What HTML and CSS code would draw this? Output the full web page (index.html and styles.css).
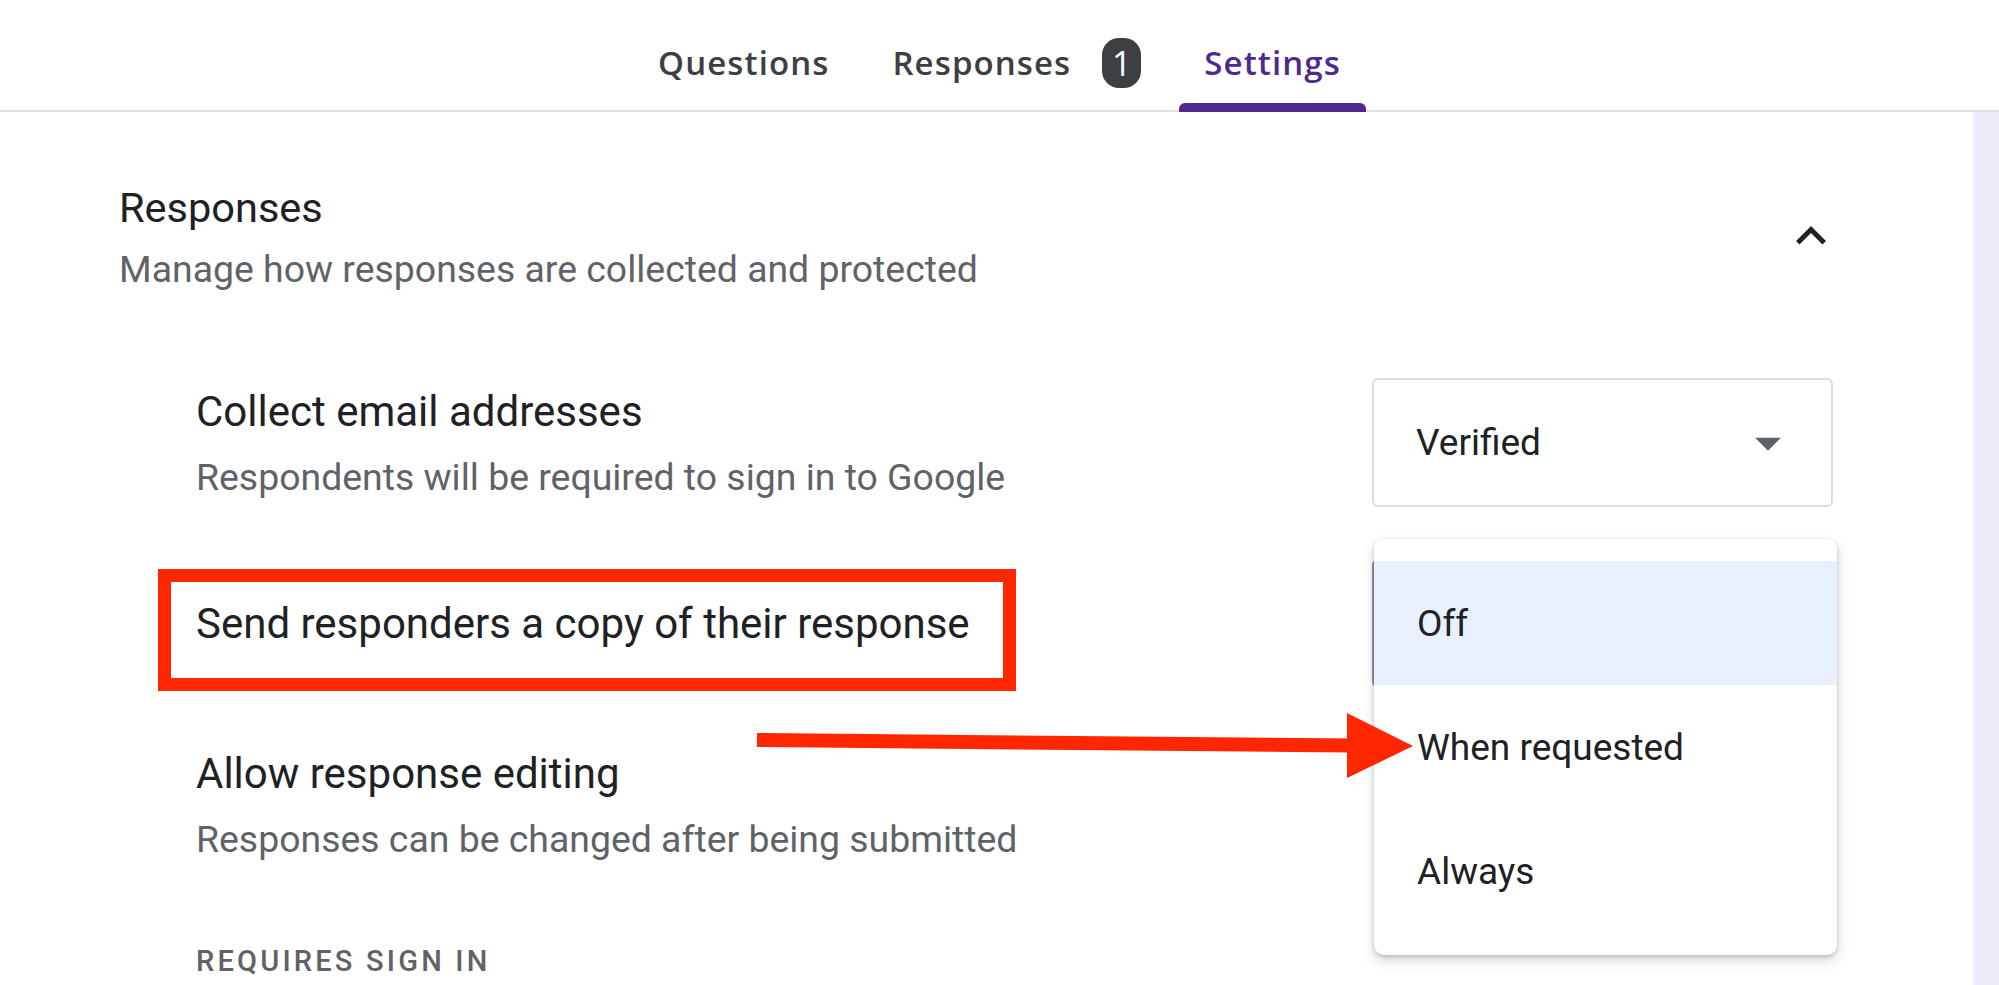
FILE: index.html
```html
<!DOCTYPE html>
<html lang="en">
<head>
    <meta charset="UTF-8">
    <meta name="viewport" content="width=device-width, initial-scale=1.0">
    <title>Form settings</title>
    <link rel="stylesheet" href="styles.css">
</head>
<body>

    <header class="topbar">
        <nav class="tabs">
            <a class="tab">Questions</a>
            <a class="tab">Responses<span class="badge">1</span></a>
            <a class="tab tab-active">Settings</a>
        </nav>
    </header>

    <main class="page">
        <section class="panel">
            <div class="section-head">
                <div>
                    <h2 class="section-title">Responses</h2>
                    <p class="section-sub">Manage how responses are collected and protected</p>
                </div>
                <button class="icon-btn" aria-label="Collapse">
                    <svg viewBox="0 0 24 24" width="60" height="60"><path d="M12 8l-6 6 1.41 1.41L12 10.83l4.59 4.58L18 14z"/></svg>
                </button>
            </div>

            <div class="setting-list">
                <div class="setting-row">
                    <div class="setting-text">
                        <div class="setting-title">Collect email addresses</div>
                        <div class="setting-desc">Respondents will be required to sign in to Google</div>
                    </div>
                    <div class="select">
                        <span>Verified</span>
                        <svg viewBox="0 0 24 24" width="62" height="62"><path d="M7 10l5 5 5-5z"/></svg>
                    </div>
                </div>

                <div class="setting-row">
                    <div class="setting-text">
                        <div class="setting-title">Send responders a copy of their response</div>
                    </div>
                    <div class="select select-open">
                        <ul class="menu">
                            <li class="menu-item selected">Off</li>
                            <li class="menu-item">When requested</li>
                            <li class="menu-item">Always</li>
                        </ul>
                    </div>
                </div>

                <div class="setting-row">
                    <div class="setting-text">
                        <div class="setting-title">Allow response editing</div>
                        <div class="setting-desc">Responses can be changed after being submitted</div>
                    </div>
                </div>

                <div class="group-label">REQUIRES SIGN IN</div>
            </div>
        </section>
        <aside class="side-strip"></aside>
    </main>

    <!-- red callout drawn on top of the page -->
    <svg class="callout" viewBox="0 0 1999 985" width="1999" height="985">
        <rect x="164.5" y="575.5" width="845" height="109" fill="none" stroke="#ff2600" stroke-width="13"/>
        <line x1="757" y1="740" x2="1352" y2="745.5" stroke="#ff2600" stroke-width="14"/>
        <polygon points="1347,713 1413,746 1347,778" fill="#ff2600"/>
    </svg>

</body>
</html>
```

FILE: styles.css
```css
body { margin: 0; font-family: Roboto, "Liberation Sans", sans-serif; color: #202124; background: #fff; }

.topbar { height: 110px; border-bottom: 2px solid #e0e0e4; background: #fff; }
.tabs { display: flex; justify-content: center; gap: 13px; height: 110px; }
.tab { position: relative; display: flex; align-items: flex-start; padding: 40px 25px 0; font-family: "Open Sans", sans-serif; font-weight: 600; font-size: 33px; line-height: 45px; letter-spacing: 1.1px; color: #3c4043; cursor: pointer; }
.tab-active { color: #4e2a8e; }
.tab-active::after { content: ""; position: absolute; left: 0; right: 0; bottom: -2px; height: 9px; background: #4e2a8e; border-radius: 6px 6px 0 0; }
.badge { display: flex; align-items: center; justify-content: center; width: 39px; height: 50px; margin: -2px 0 0 31px; border-radius: 17px; background: #3c4043; color: #fff; font-size: 34px; font-weight: 500; letter-spacing: 0; }

.page { display: flex; min-height: 873px; }
.panel { flex: 1; padding: 72px 132px 0 119px; }
.side-strip { width: 26px; background: #f0ebf8; }

.section-head { display: flex; justify-content: space-between; align-items: center; }
.section-title { margin: 0; font-size: 41.5px; line-height: 48px; font-weight: 400; color: #202124; }
.section-sub { margin: 15px 0 0; font-size: 37.4px; line-height: 44px; color: #5f6368; }
.icon-btn { width: 60px; height: 60px; margin-top: -4px; padding: 0; border: none; background: none; fill: #202124; cursor: pointer; }
.icon-btn svg { display: block; }

.setting-list { margin-top: 87px; padding: 0 8px 0 77px; display: flex; flex-direction: column; gap: 52px; }
.setting-row { display: flex; justify-content: space-between; align-items: center; min-height: 129px; }
.setting-title { font-size: 42px; line-height: 50px; color: #202124; }
.setting-desc { margin-top: 18px; font-size: 37.4px; line-height: 44px; color: #5f6368; }

.select { position: relative; box-sizing: border-box; width: 461px; height: 129px; display: flex; align-items: center; justify-content: space-between; padding: 0 32px 0 42px; border: 2px solid #dadce0; border-radius: 6px; font-size: 37px; color: #202124; background: #fff; }
.select svg { display: block; fill: #5f6368; }
.select-open { border-color: #8f9399; }

.menu { position: absolute; top: -22px; left: 0; z-index: 5; width: 463px; margin: 0; padding: 22px 0; list-style: none; background: #fff; border-radius: 10px; box-shadow: 0 2px 4px rgba(60, 64, 67, 0.25), 0 6px 14px rgba(60, 64, 67, 0.18); }
.menu-item { height: 124px; display: flex; align-items: center; padding-left: 43px; font-size: 37px; color: #202124; }
.menu-item.selected { background: #e8f0fe; }

.group-label { margin-top: 23px; font-size: 29px; line-height: 34px; font-weight: 500; letter-spacing: 3.2px; color: #5f6368; }

.callout { position: absolute; top: 0; left: 0; z-index: 10; pointer-events: none; }
```
